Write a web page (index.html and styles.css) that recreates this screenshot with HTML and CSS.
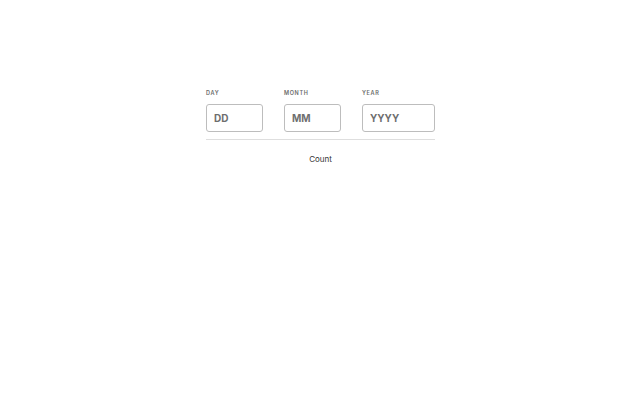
FILE: index.html
```html
<!DOCTYPE html>
<html>
<head>
<meta charset="utf-8">
<link rel="stylesheet" href="styles.css">
</head>
<body>
<main class="page">
  <form class="card">
    <div class="fields">
      <label class="field field-day">
        <span class="label">Day</span>
        <input class="input" type="text" placeholder="DD">
      </label>
      <label class="field field-month">
        <span class="label">Month</span>
        <input class="input" type="text" placeholder="MM">
      </label>
      <label class="field field-year">
        <span class="label">Year</span>
        <input class="input" type="text" placeholder="YYYY">
      </label>
    </div>
    <div class="divider"></div>
    <button class="count" type="button">Count</button>
  </form>
</main>
</body>
</html>
```
FILE: styles.css
```css
html, body {
  margin: 0;
  padding: 0;
  background: #ffffff;
}
body {
  font-family: Inter, "Open Sans", sans-serif;
  width: 640px;
  height: 400px;
}
.page {
  display: flex;
  justify-content: center;
  padding-top: 89px;
}
.card {
  width: 229px;
  margin-left: 1px;
  display: flex;
  flex-direction: column;
}
.fields {
  display: flex;
  gap: 21px;
}
.field {
  display: flex;
  flex-direction: column;
}
.label {
  font-size: 5.5px;
  font-weight: 600;
  letter-spacing: 0.12em;
  text-transform: uppercase;
  color: #6a6a6a;
  height: 8px;
  line-height: 8px;
  margin-bottom: 7px;
}
.input {
  box-sizing: border-box;
  height: 28px;
  border: 1px solid #bdbdbd;
  border-radius: 3px;
  padding: 0 0 0 7px;
  font-family: inherit;
  font-size: 10px;
  font-weight: 700;
  color: #333;
  outline: none;
  margin: 0;
}
.input::placeholder {
  color: #6e6e6e;
}
.field-day .input, .field-month .input {
  width: 57px;
}
.field-year .input {
  width: 73px;
}
.divider {
  height: 1px;
  background: #dedede;
  margin-top: 7px;
}
.count {
  align-self: center;
  margin-top: 14px;
  border: none;
  background: none;
  padding: 0;
  font-family: inherit;
  font-size: 8px;
  color: #333;
  cursor: pointer;
}
```
